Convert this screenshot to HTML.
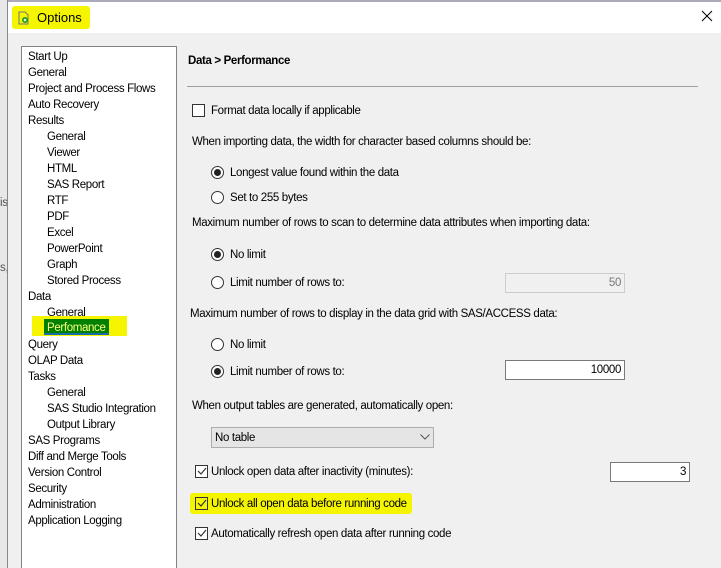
<!DOCTYPE html>
<html><head><style>
html,body{margin:0;width:721px;height:568px;overflow:hidden}
body{background:#f0f0f0;font-family:"Liberation Sans",sans-serif;font-size:11.5px;letter-spacing:-0.35px;color:#000;position:relative}
.a{position:absolute;white-space:nowrap;line-height:18px}
.cb{position:absolute;width:11px;height:11px;border:1px solid #333;background:#fff}
.rb{position:absolute;width:11px;height:11px;border:1px solid #333;border-radius:50%;background:#fff}
.rb.on::after{content:"";position:absolute;left:2px;top:2px;width:7px;height:7px;border-radius:50%;background:#222}
.tb{position:absolute;background:#fff;border:1px solid #7a7a7a;text-align:right;line-height:19px;padding-right:3px;box-sizing:border-box}
.ck{position:absolute;left:1px;top:0px}
</style></head><body>
<div style="position:absolute;left:0;top:0;width:7px;height:568px;background:#e8e8e8"></div>
<div class="a" style="left:0;top:194px;color:#555">is</div>
<div class="a" style="left:0;top:259px;color:#555">s,</div>
<div style="position:absolute;left:7px;top:0;width:1px;height:568px;background:#888"></div>
<div style="position:absolute;left:8px;top:0;width:713px;height:33px;background:#fff;border-top:2px solid #aab;box-sizing:border-box"></div>
<div style="position:absolute;left:12px;top:6px;width:78px;height:23px;background:#f5f500;border-radius:3px"></div>
<svg style="position:absolute;left:18px;top:11px" width="12" height="14"><path d="M1 1h6l3 3v9H1z" fill="none" stroke="#777"/><circle cx="7" cy="9" r="3" fill="#2a9a2a"/><circle cx="7" cy="9" r="1.3" fill="#cfc"/></svg>
<div class="a" style="left:37px;top:9px;font-size:13px;letter-spacing:0">Options</div>
<svg style="position:absolute;left:701px;top:10px" width="12" height="12"><path d="M1 1L11 11M11 1L1 11" stroke="#000" stroke-width="1"/></svg>
<div style="position:absolute;left:21px;top:46px;width:156px;height:530px;background:#fff;border:1px solid #828282;box-sizing:border-box"></div>
<div style="position:absolute;left:32px;top:316px;width:95px;height:20px;background:#f5f500"></div>
<div style="position:absolute;left:44px;top:319px;width:65px;height:16px;background:#008000;border-bottom:2px solid #1a6ab0;box-sizing:border-box"></div>
<div class="a" style="left:28px;top:48px">Start Up</div>
<div class="a" style="left:28px;top:64px">General</div>
<div class="a" style="left:28px;top:80px">Project and Process Flows</div>
<div class="a" style="left:28px;top:96px">Auto Recovery</div>
<div class="a" style="left:28px;top:112px">Results</div>
<div class="a" style="left:47px;top:128px">General</div>
<div class="a" style="left:47px;top:144px">Viewer</div>
<div class="a" style="left:47px;top:160px">HTML</div>
<div class="a" style="left:47px;top:176px">SAS Report</div>
<div class="a" style="left:47px;top:192px">RTF</div>
<div class="a" style="left:47px;top:208px">PDF</div>
<div class="a" style="left:47px;top:224px">Excel</div>
<div class="a" style="left:47px;top:240px">PowerPoint</div>
<div class="a" style="left:47px;top:256px">Graph</div>
<div class="a" style="left:47px;top:272px">Stored Process</div>
<div class="a" style="left:28px;top:288px">Data</div>
<div class="a" style="left:47px;top:304px">General</div>
<div class="a" style="left:47px;top:319px;color:#ffff80">Perfomance</div>
<div class="a" style="left:28px;top:336px">Query</div>
<div class="a" style="left:28px;top:352px">OLAP Data</div>
<div class="a" style="left:28px;top:368px">Tasks</div>
<div class="a" style="left:47px;top:384px">General</div>
<div class="a" style="left:47px;top:400px">SAS Studio Integration</div>
<div class="a" style="left:47px;top:416px">Output Library</div>
<div class="a" style="left:28px;top:432px">SAS Programs</div>
<div class="a" style="left:28px;top:448px">Diff and Merge Tools</div>
<div class="a" style="left:28px;top:464px">Version Control</div>
<div class="a" style="left:28px;top:480px">Security</div>
<div class="a" style="left:28px;top:496px">Administration</div>
<div class="a" style="left:28px;top:512px">Application Logging</div>

<div class="a" style="left:188px;top:52px;font-weight:bold">Data &gt; Performance</div>
<div style="position:absolute;left:187px;top:86px;width:511px;height:1px;background:#a0a0a0"></div>

<div class="cb" style="left:192px;top:104px"></div>
<div class="a" style="left:211px;top:102px">Format data locally if applicable</div>
<div class="a" style="left:192px;top:133px">When importing data, the width for character based columns should be:</div>
<div class="rb on" style="left:211px;top:166px"></div>
<div class="a" style="left:230px;top:164px">Longest value found within the data</div>
<div class="rb" style="left:211px;top:191px"></div>
<div class="a" style="left:230px;top:189px">Set to 255 bytes</div>
<div class="a" style="left:192px;top:214px">Maximum number of rows to scan to determine data attributes when importing data:</div>
<div class="rb on" style="left:211px;top:248px"></div>
<div class="a" style="left:230px;top:246px">No limit</div>
<div class="rb" style="left:211px;top:276px"></div>
<div class="a" style="left:230px;top:274px">Limit number of rows to:</div>
<div class="tb" style="left:505px;top:273px;width:120px;height:20px;border-color:#ccc;background:#f0f0f0;color:#777">50</div>
<div class="a" style="left:190px;top:305px">Maximum number of rows to display in the data grid with SAS/ACCESS data:</div>
<div class="rb" style="left:211px;top:338px"></div>
<div class="a" style="left:230px;top:336px">No limit</div>
<div class="rb on" style="left:211px;top:365px"></div>
<div class="a" style="left:230px;top:363px">Limit number of rows to:</div>
<div class="tb" style="left:505px;top:360px;width:120px;height:20px">10000</div>
<div class="a" style="left:192px;top:397px">When output tables are generated, automatically open:</div>
<div style="position:absolute;left:211px;top:427px;width:223px;height:21px;background:#e5e5e5;border:1px solid #adadad;box-sizing:border-box"></div>
<div class="a" style="left:215px;top:429px">No table</div>
<svg style="position:absolute;left:420px;top:434px" width="10" height="6"><path d="M0.5 0.5L5 5L9.5 0.5" fill="none" stroke="#555"/></svg>
<div class="cb" style="left:195px;top:465px"><svg class="ck" width="10" height="10"><path d="M1 5L4 8L9 2" fill="none" stroke="#333" stroke-width="1.2"/></svg></div>
<div class="a" style="left:211px;top:463px">Unlock open data after inactivity (minutes):</div>
<div class="tb" style="left:610px;top:462px;width:80px;height:20px">3</div>
<div style="position:absolute;left:190px;top:493px;width:222px;height:21px;background:#f5f500;border-radius:3px"></div>
<div class="cb" style="left:195px;top:497px;background:#f5f500"><svg class="ck" width="10" height="10"><path d="M1 5L4 8L9 2" fill="none" stroke="#333" stroke-width="1.2"/></svg></div>
<div class="a" style="left:211px;top:495px">Unlock all open data before running code</div>
<div class="cb" style="left:195px;top:527px"><svg class="ck" width="10" height="10"><path d="M1 5L4 8L9 2" fill="none" stroke="#333" stroke-width="1.2"/></svg></div>
<div class="a" style="left:211px;top:525px">Automatically refresh open data after running code</div>
</body></html>
